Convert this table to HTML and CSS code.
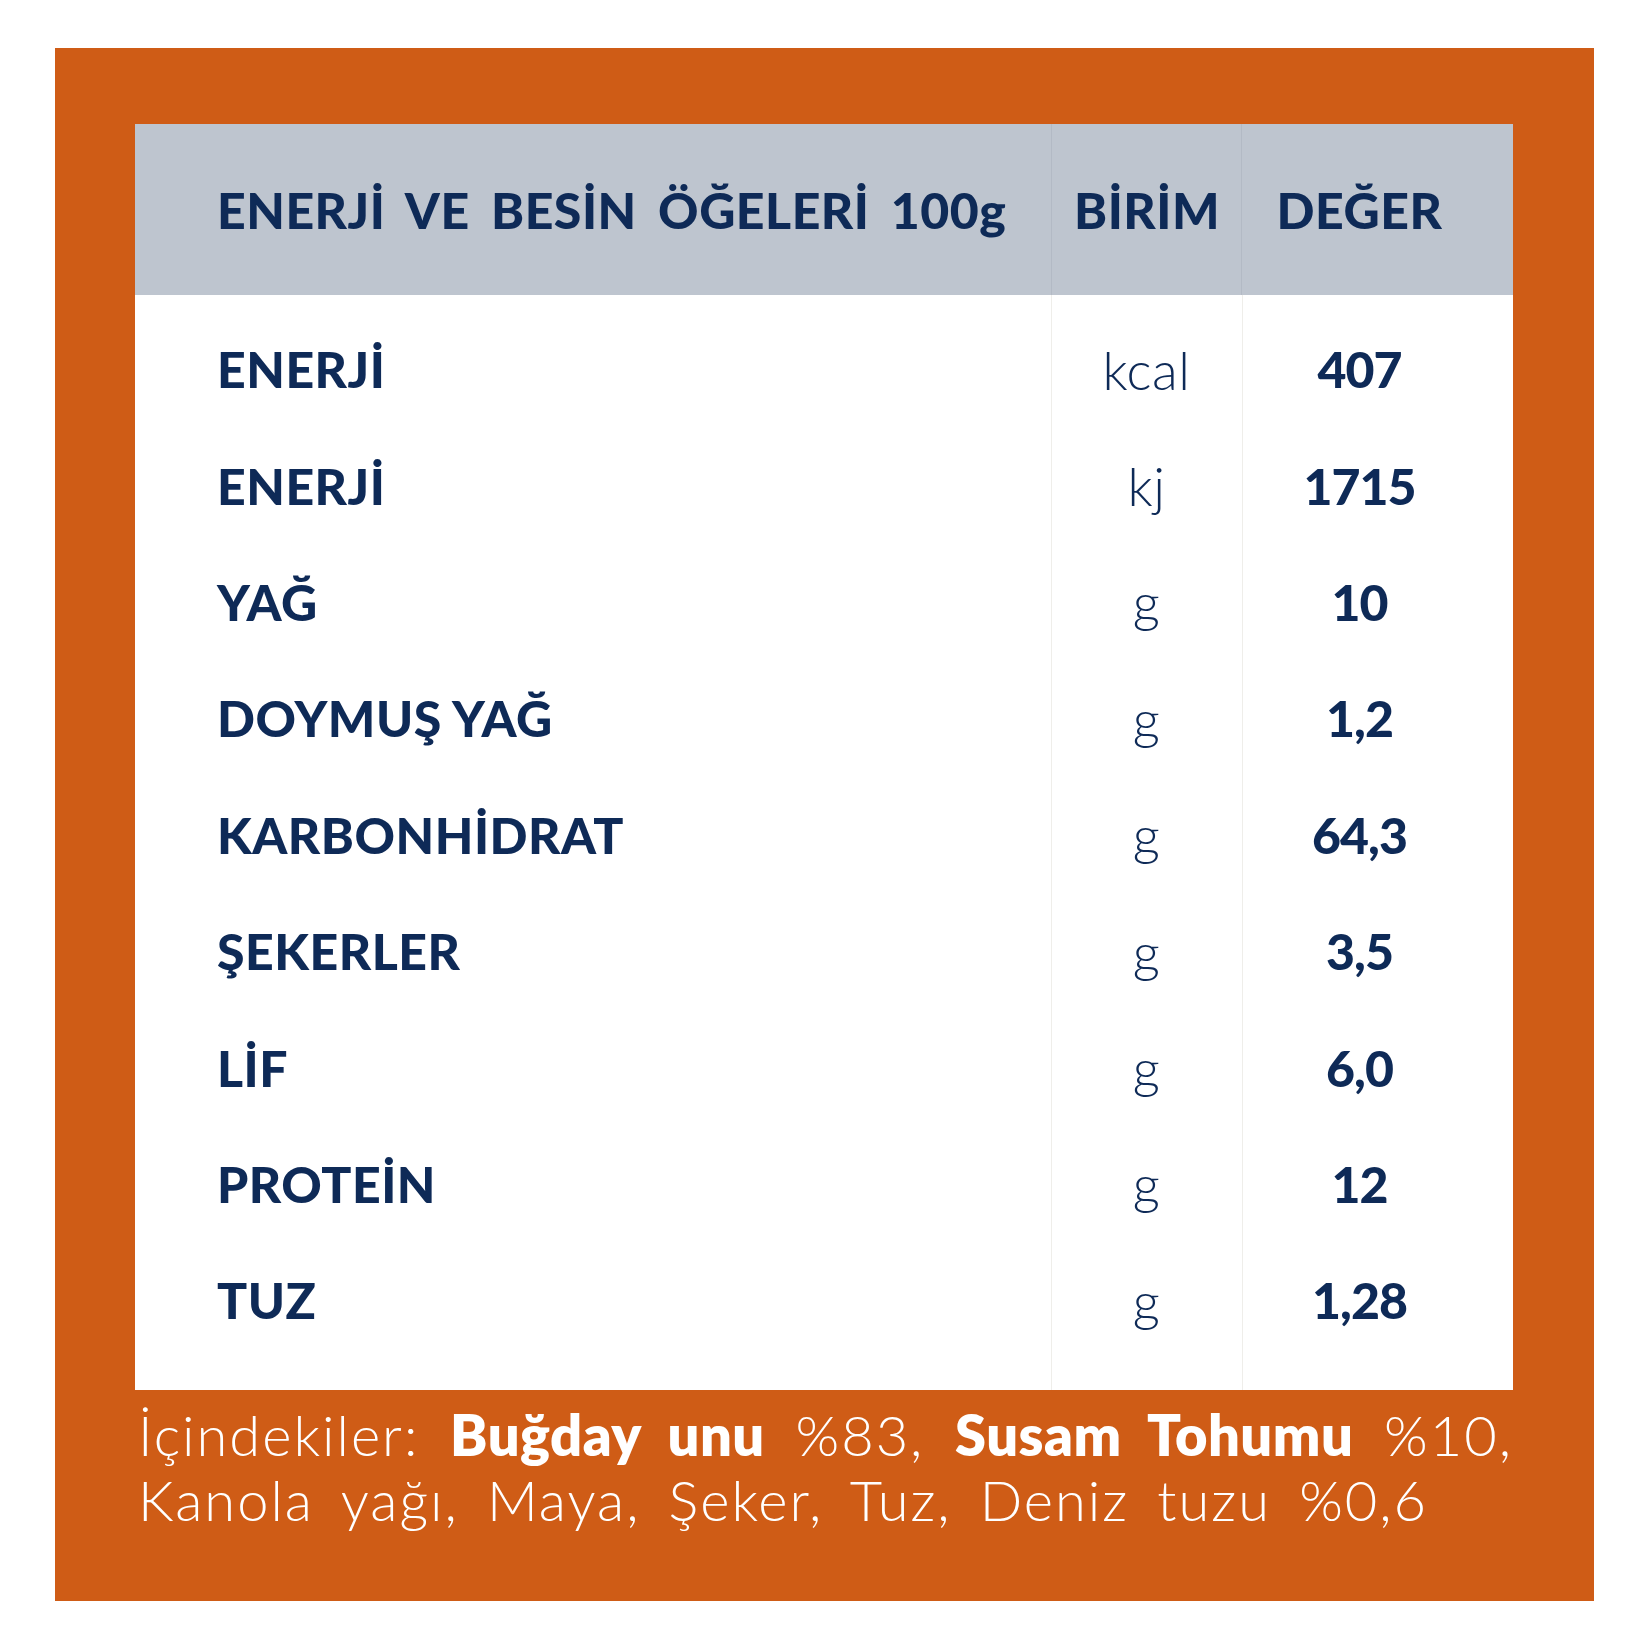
FILE: index.html
```html
<!DOCTYPE html>
<html lang="tr">
<head>
<meta charset="utf-8">
<title>Besin Değerleri</title>
<link rel="stylesheet" href="styles.css">
</head>
<body>
<div class="frame">
  <div class="table">
    <div class="row head">
      <div class="cell name">ENERJİ VE BESİN ÖĞELERİ 100g</div>
      <div class="cell unit">BİRİM</div>
      <div class="cell val">DEĞER</div>
    </div>
    <div class="body">
      <div class="row"><div class="cell name">ENERJİ</div><div class="cell unit">kcal</div><div class="cell val">407</div></div>
      <div class="row"><div class="cell name">ENERJİ</div><div class="cell unit">kj</div><div class="cell val">1715</div></div>
      <div class="row"><div class="cell name">YAĞ</div><div class="cell unit">g</div><div class="cell val">10</div></div>
      <div class="row"><div class="cell name">DOYMUŞ YAĞ</div><div class="cell unit">g</div><div class="cell val">1,2</div></div>
      <div class="row"><div class="cell name">KARBONHİDRAT</div><div class="cell unit">g</div><div class="cell val">64,3</div></div>
      <div class="row"><div class="cell name">ŞEKERLER</div><div class="cell unit">g</div><div class="cell val">3,5</div></div>
      <div class="row"><div class="cell name">LİF</div><div class="cell unit">g</div><div class="cell val">6,0</div></div>
      <div class="row"><div class="cell name">PROTEİN</div><div class="cell unit">g</div><div class="cell val">12</div></div>
      <div class="row"><div class="cell name">TUZ</div><div class="cell unit">g</div><div class="cell val">1,28</div></div>
    </div>
  </div>
  <p class="ingredients">
    <span class="line first">İçindekiler: <b>Buğday unu</b> %83, <b>Susam Tohumu</b> %10,</span>
    <span class="line">Kanola yağı, Maya, Şeker, Tuz, Deniz tuzu %0,6</span>
  </p>
</div>
</body>
</html>
```
FILE: styles.css
```css
html, body {
  margin: 0;
  padding: 0;
  background: #ffffff;
}
body {
  padding: 48px 0 0 55px;
  font-family: Lato, "Noto Sans", sans-serif;
}
.frame {
  width: 1539px;
  height: 1553px;
  box-sizing: border-box;
  background: #cf5c16;
  padding: 76px 81px 0 80px;
}
.table {
  background: #ffffff;
  height: 1266px;
  display: flex;
  flex-direction: column;
}
.row {
  display: grid;
  grid-template-columns: 916px 191px 271px;
  height: 116.4px;
}
.row.head {
  height: 171px;
  background: #bec5cf;
}
.head .name {
  word-spacing: 9px;
}
.body {
  flex: 1;
  padding-top: 16px;
  background:
    linear-gradient(#efeeea, #efeeea) 916px 0 / 1px 100% no-repeat,
    linear-gradient(#efeeea, #efeeea) 1107px 0 / 1px 100% no-repeat;
}
.cell {
  display: flex;
  align-items: center;
  color: #0e2a57;
  font-size: 50px;
  font-weight: 900;
  letter-spacing: 0.5px;
}
.name {
  padding-left: 82px;
}
.unit {
  justify-content: center;
}
.val {
  justify-content: center;
  padding-right: 36px;
}
.body .val {
  letter-spacing: -1px;
}
.head .unit,
.head .val {
  border-left: 1px solid #b3bac5;
}
.head .val { margin-left: -1px; }
.body .unit {
  font-weight: 300;
  font-size: 53px;
  letter-spacing: 0.5px;
}
.ingredients {
  margin: 0;
  padding: 12px 0 0 3px;
  color: #ffffff;
  font-size: 56px;
  font-weight: 300;
  letter-spacing: 2px;
  line-height: 65px;
  word-spacing: 11px;
}
.line {
  display: block;
  white-space: nowrap;
}
.line.first {
  text-align: justify;
  text-align-last: justify;
  word-spacing: 4px;
}
.ingredients b {
  font-weight: 800;
  letter-spacing: 0.5px;
}
```
